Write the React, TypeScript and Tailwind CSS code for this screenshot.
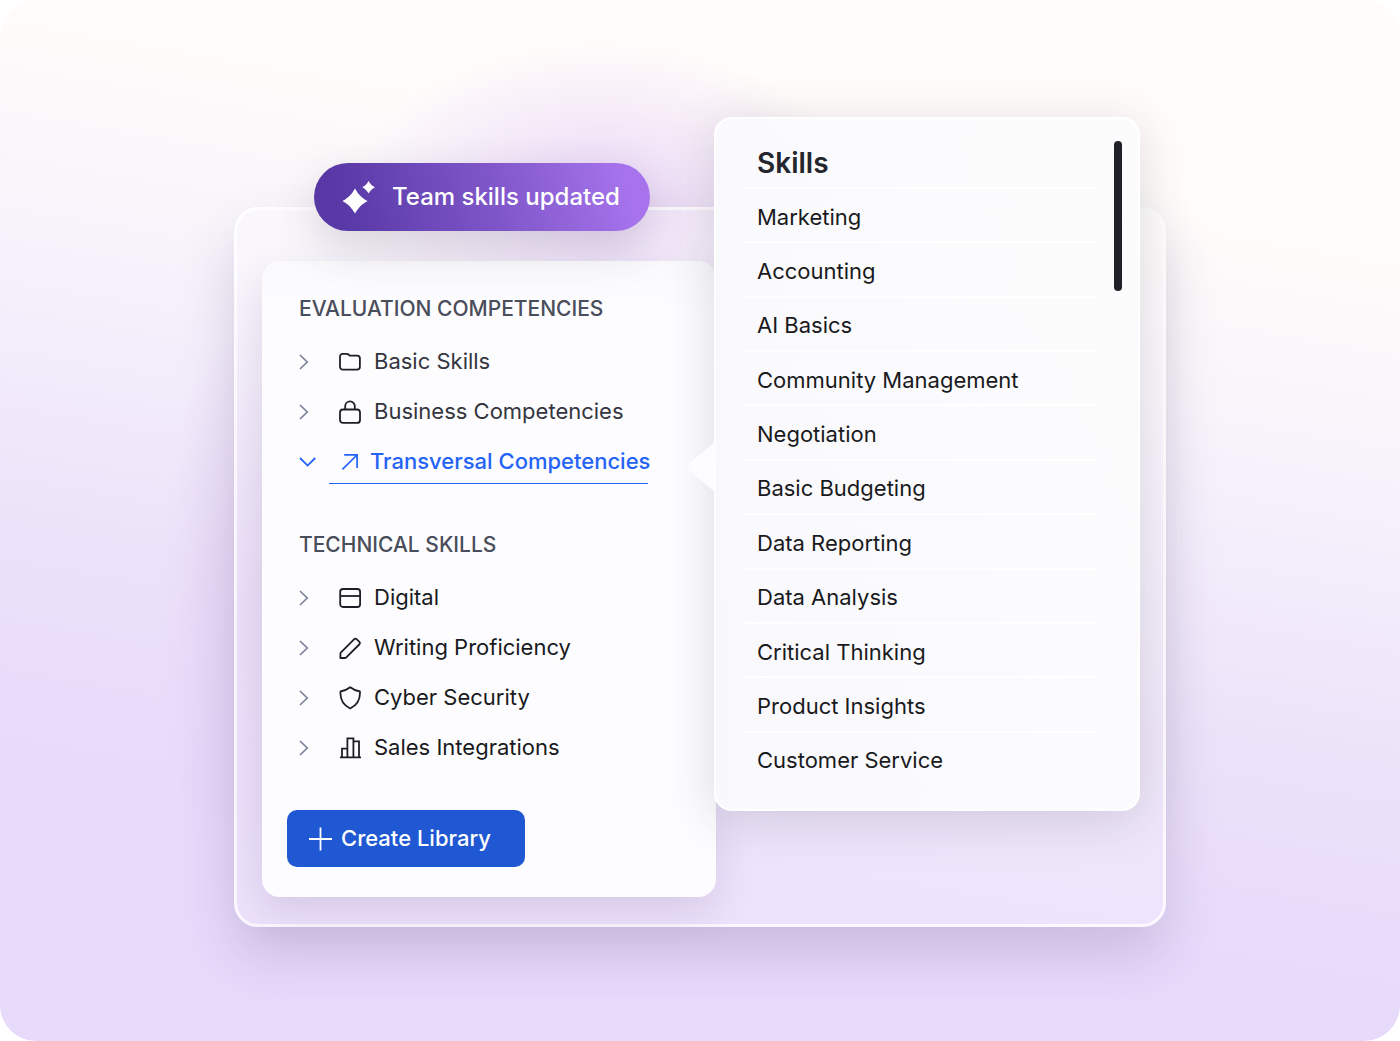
import React, { useState } from 'react';

interface Library {
    id: string;
    label: string;
    icon: React.ReactNode;
}

interface LibraryGroup {
    title: string;
    tone: string;
    items: Library[];
}

const iconClass = 'block w-[22px] h-6 shrink-0';

const FolderIcon = () => (
    <svg className={iconClass} viewBox="0 0 22 24" fill="none" stroke="#1e1f26" strokeWidth="1.8" strokeLinejoin="round">
        <path d="M1 6.4A2.6 2.6 0 0 1 3.6 3.8h4.2c.7 0 1.2.2 1.7.7l.6.6c.4.4.9.6 1.5.6h6.6A2.7 2.7 0 0 1 20.9 8.4v8.4a2.9 2.9 0 0 1-2.9 2.9H4a3 3 0 0 1-3-3z" />
    </svg>
);

const LockIcon = () => (
    <svg className={iconClass} viewBox="0 0 22 24" fill="none" stroke="#1e1f26" strokeWidth="1.8">
        <rect x="1" y="9.5" width="20" height="13.4" rx="3" />
        <path d="M6.2 9.5V6.2a4.8 4.8 0 0 1 9.6 0v3.3" />
    </svg>
);

const ArrowIcon = () => (
    <svg className={iconClass} viewBox="0 0 22 24" fill="none" stroke="currentColor" strokeWidth="1.7">
        <path d="M3.4 19.4 18 5M5.2 4.8h12.900v13.200" />
    </svg>
);

const WindowIcon = () => (
    <svg className={iconClass} viewBox="0 0 22 24" fill="none" stroke="#1e1f26" strokeWidth="1.8">
        <rect x="1.2" y="3" width="19.9" height="18" rx="2.8" />
        <path d="M1.2 10h19.9" />
    </svg>
);

const PenIcon = () => (
    <svg className={iconClass} viewBox="0 0 22 24" fill="none" stroke="#1e1f26" strokeWidth="1.8" strokeLinejoin="round">
        <path d="M1.4 22v-4.200c0-.6.2-1.100.6-1.500L15 3.300c.8-.8 2-.8 2.800 0l2.400 2.400c.8.8.8 2 0 2.800L7.300 21.400c-.4.400-.9.600-1.500.600z" />
    </svg>
);

const ShieldIcon = () => (
    <svg className={iconClass} viewBox="0 0 22 24" fill="none" stroke="#1e1f26" strokeWidth="1.8" strokeLinejoin="round">
        <path d="M11.2 1.3c2.600 2.100 5.800 3.400 9.700 4.200.5 6.800-2 13.200-9.700 17C3.500 18.700 1 12.300 1.500 5.500c3.900-.8 7.100-2.100 9.700-4.200z" />
    </svg>
);

const ChartIcon = () => (
    <svg className={iconClass} viewBox="0 0 22 24" fill="none" stroke="#1e1f26" strokeWidth="1.8">
        <path d="M1 21.400h21M3 21.400v-8.800h5.400M8.400 21.400V2.300h6v19.100M14.400 5.400h5.600v16" />
    </svg>
);

const SparklesIcon = () => (
    <svg className="w-[34px] h-[34px] shrink-0" viewBox="0 0 34 34" fill="white">
        <path d="M13 8.400C16.200 14.200 19.800 17.800 25.600 21 19.800 24.200 16.200 27.800 13 33.600 9.800 27.800 6.200 24.200.4 21 6.200 17.800 9.800 14.200 13 8.400z" />
        <path d="M26.600 1c1.600 2.900 3.400 4.700 6.300 6.300-2.900 1.600-4.700 3.400-6.300 6.300-1.600-2.900-3.400-4.700-6.300-6.300 2.900-1.600 4.700-3.400 6.300-6.300z" />
    </svg>
);

const Chevron = ({ open }: { open: boolean }) =>
    open ? (
        <svg className="w-[18px] h-4" viewBox="0 0 18 16" fill="none" stroke="currentColor" strokeWidth="1.8">
            <path d="M1 4l7.600 7.600L16.200 4" />
        </svg>
    ) : (
        <svg className="w-[10px] h-4" viewBox="0 0 10 16" fill="none" stroke="#7c8299" strokeWidth="1.7">
            <path d="M1 1l7.200 7L1 15" />
        </svg>
    );

const groups: LibraryGroup[] = [
    {
        title: 'EVALUATION COMPETENCIES',
        tone: 'text-[#34353e]',
        items: [
            { id: 'basic', label: 'Basic Skills', icon: <FolderIcon /> },
            { id: 'business', label: 'Business Competencies', icon: <LockIcon /> },
            { id: 'transversal', label: 'Transversal Competencies', icon: <ArrowIcon /> },
        ],
    },
    {
        title: 'TECHNICAL SKILLS',
        tone: 'text-[#191a20]',
        items: [
            { id: 'digital', label: 'Digital', icon: <WindowIcon /> },
            { id: 'writing', label: 'Writing Proficiency', icon: <PenIcon /> },
            { id: 'cyber', label: 'Cyber Security', icon: <ShieldIcon /> },
            { id: 'sales', label: 'Sales Integrations', icon: <ChartIcon /> },
        ],
    },
];

const skills = [
    'Marketing',
    'Accounting',
    'AI Basics',
    'Community Management',
    'Negotiation',
    'Basic Budgeting',
    'Data Reporting',
    'Data Analysis',
    'Critical Thinking',
    'Product Insights',
    'Customer Service',
];

export default function App() {
    const [active, setActive] = useState('transversal');

    return (
        <div className="bg-white font-['Inter',sans-serif]">
            <main className="relative isolate min-h-screen overflow-hidden rounded-[36px] bg-[linear-gradient(190deg,#fffcfa_0%,#fffcfa_18%,#f9f6fb_32%,#f3edfb_45%,#ece2f9_60%,#e8dafb_77%,#e8dafb_100%)] px-6 pt-[207px] pb-[114px]">
                {/* Ambient glows */}
                <div className="absolute inset-0 -z-10 bg-[radial-gradient(ellipse_250px_170px_at_43%_20%,#e2c8f5c0,#e4ccf560_50%,#e3c9f500),radial-gradient(ellipse_110px_320px_at_19%_60%,#dcc4f080,#dcc4f000)]" />

                <section className="relative mx-auto flex max-w-[932px] items-start rounded-3xl border-[3px] border-white/75 bg-white/25 pt-[51px] pr-[23px] pb-[27px] pl-[25px] shadow-[0_28px_54px_rgba(70,55,100,0.18)]">
                    <div className="absolute -top-[47px] left-[77px] flex h-[68px] w-[336px] items-center gap-4 rounded-full bg-[linear-gradient(75deg,#5738a5_8%,#7c54c6_50%,#a673ec_92%)] pl-7 text-2xl font-medium whitespace-nowrap text-white shadow-[0_16px_44px_rgba(60,50,80,0.18)]" role="status">
                        <SparklesIcon />
                        Team skills updated
                    </div>

                    <nav className="w-[454px] shrink-0 rounded-[18px] bg-[linear-gradient(#fafafc,#fdfdff_8%)] pt-[33px] pb-[30px] pl-[37px] shadow-[0_16px_40px_rgba(70,50,100,0.14)]">
                        {groups.map((group) => (
                            <div key={group.title} className="mb-[43px] last-of-type:mb-[37px]">
                                <h2 className="mb-[13px] text-[21px] leading-[30px] font-medium text-[#4a4d5a]">{group.title}</h2>
                                <ul>
                                    {group.items.map((item) => {
                                        const isActive = item.id === active;
                                        return (
                                            <li key={item.id}>
                                                <button
                                                    type="button"
                                                    aria-expanded={isActive}
                                                    onClick={() => setActive(item.id)}
                                                    className={`flex h-[50px] items-center text-[22px] whitespace-nowrap ${isActive ? 'font-medium text-[#2463f5]' : group.tone}`}
                                                >
                                                    <span className="w-[30px] shrink-0">
                                                        <Chevron open={isActive} />
                                                    </span>
                                                    <span className={`flex h-11 w-[319px] items-center border-b pl-[10px] ${isActive ? 'gap-[9px] border-[#2463f5]' : 'gap-[13px] border-transparent'}`}>
                                                        {item.icon}
                                                        {item.label}
                                                    </span>
                                                </button>
                                            </li>
                                        );
                                    })}
                                </ul>
                            </div>
                        ))}
                        <button type="button" className="-ml-3 flex h-[57px] w-[238px] items-center gap-2 rounded-[10px] bg-[#1f58d2] pl-[22px] text-[22px] font-medium whitespace-nowrap text-white">
                            <svg className="h-6 w-6" viewBox="0 0 24 24" stroke="white" strokeWidth="1.8">
                                <path d="M11.500.5v23M0 12h23" />
                            </svg>
                            Create Library
                        </button>
                    </nav>

                    <aside className="relative -mt-[144px] -ml-0.5 min-w-0 flex-1 rounded-[18px] border-2 border-white bg-[linear-gradient(100deg,#fafafde8,#fcfcfdf0)] pb-6 shadow-[0_8px_50px_rgba(60,60,80,0.18)]">
                        {/* Pointer to the selected library */}
                        <svg className="absolute top-[322px] -left-[29px] h-[52px] w-[29px]" viewBox="0 0 29 52" fill="#fdfdff">
                            <path d="M29 0v52L2.500 29.500Q-1 26 2.500 22.500z" />
                        </svg>
                        <h1 className="pt-[26px] pb-[6px] pl-[41px] text-[28px] leading-9 font-semibold text-[#24252d]">Skills</h1>
                        <ul className="mr-[42px] ml-7 grid min-h-[598px] auto-rows-fr">
                            {skills.map((skill) => (
                                <li key={skill} className="flex items-center border-t-2 border-white pt-1 pl-[13px] text-[22px] whitespace-nowrap text-[#191a20]">
                                    {skill}
                                </li>
                            ))}
                        </ul>
                        <div className="absolute top-[22px] right-4 h-[150px] w-2 rounded-full bg-[#202127]" />
                    </aside>
                </section>
            </main>
        </div>
    );
}
